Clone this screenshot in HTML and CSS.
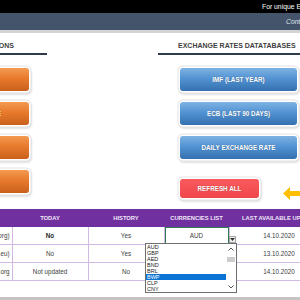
FILE: index.html
```html
<!DOCTYPE html>
<html>
<head>
<meta charset="utf-8">
<link rel="stylesheet" href="styles.css">
</head>
<body>
<div class="topbar">For unique Exchange Rates Excel templates visit our website</div>
<div class="navbar">Contact us</div>
<div class="rule"></div>
<div class="main">
  <section class="col col-left">
    <h2 class="heading">ADDITIONAL FUNCTIONS</h2>
    <div class="btns">
      <div class="btn orange">CONVERTER</div>
      <div class="btn orange">ADD CUSTOM RATE</div>
      <div class="btn orange">SETTINGS</div>
      <div class="btn orange">HELP</div>
    </div>
  </section>
  <section class="col col-right">
    <h2 class="heading">EXCHANGE RATES DATATABASES</h2>
    <div class="btns">
      <div class="btn blue">IMF (LAST YEAR)</div>
      <div class="btn blue">ECB (LAST 90 DAYS)</div>
      <div class="btn blue">DAILY EXCHANGE RATE</div>
      <div class="refresh-row">
        <div class="btn red">REFRESH ALL</div>
        <svg class="arrow" width="20" height="13" viewBox="0 0 20 13"><polygon points="0,6.5 7,0 7,4 20,4 20,9 7,9 7,13" fill="#ffbf00"/></svg>
      </div>
    </div>
  </section>
</div>
<table class="grid">
  <thead>
    <tr><th class="c0"></th><th class="c1">TODAY</th><th class="c2">HISTORY</th><th class="c3">CURRENCIES LIST</th><th class="c4">LAST AVAILABLE UPDATE</th></tr>
  </thead>
  <tbody>
    <tr><td class="src">IMF (imf.org)</td><td class="strong">No</td><td>Yes</td><td class="sel">AUD</td><td>14.10.2020</td></tr>
    <tr><td class="src">ECB (europa.eu)</td><td>No</td><td>Yes</td><td></td><td>13.10.2020</td></tr>
    <tr><td class="src">Exchangerate.org</td><td>Not updated</td><td>No</td><td></td><td>14.10.2020</td></tr>
  </tbody>
</table>
<div class="footer"></div>
<div class="dd-btn"><svg width="5" height="3" viewBox="0 0 5 3"><polygon points="0,0 5,0 2.5,3" fill="#333"/></svg></div>
<div class="dropdown">
  <ul class="dd-list">
    <li>AUD</li><li>GBP</li><li>AED</li><li>BND</li><li>BRL</li><li class="on">BWP</li><li>CLP</li><li>CNY</li>
  </ul>
  <div class="dd-scroll">
    <svg width="6" height="4" viewBox="0 0 6 4"><polyline points="0.5,3.5 3,1 5.5,3.5" fill="none" stroke="#555" stroke-width="1"/></svg>
    <div class="thumb"></div>
    <svg class="down" width="6" height="4" viewBox="0 0 6 4"><polyline points="0.5,0.5 3,3 5.5,0.5" fill="none" stroke="#555" stroke-width="1"/></svg>
  </div>
</div>
</body>
</html>
```
FILE: styles.css
```css
html, body {
  margin: 0;
  padding: 0;
}
body {
  width: 300px;
  height: 300px;
  overflow: hidden;
  position: relative;
  display: flex;
  flex-direction: column;
  background: #fff;
  font-family: "Liberation Sans", Arial, sans-serif;
}
.topbar {
  height: 13px;
  flex: none;
  background: #000;
  color: #fff;
  font-size: 6.8px;
  line-height: 13px;
  padding-left: 262px;
  white-space: nowrap;
  overflow: hidden;
}
.navbar {
  height: 17px;
  flex: none;
  background: #44546a;
  color: #dfe5ee;
  font-style: italic;
  font-size: 6.8px;
  line-height: 17px;
  padding-left: 286px;
  white-space: nowrap;
  overflow: hidden;
}
.rule {
  height: 3px;
  flex: none;
  background: #d4d4d4;
}
.main {
  display: flex;
  gap: 111px;
  margin-left: -113px;
  flex: none;
}
.col {
  width: 160px;
  flex: none;
}
.heading {
  margin: 0;
  padding: 8px 0 3px;
  font-size: 7px;
  line-height: 9px;
  font-weight: bold;
  color: #3f3f3f;
  white-space: nowrap;
  border-bottom: 2px solid #2f3b4c;
}
.col-left .heading {
  text-align: right;
  padding-right: 33px;
}
.col-right .heading {
  padding-left: 20px;
}
.btns {
  display: flex;
  flex-direction: column;
  gap: 11px;
  margin-top: 13px;
}
.col-left .btns {
  align-items: flex-end;
  padding-right: 18px;
}
.col-right .btns {
  padding-left: 22px;
}
.btn {
  width: 117px;
  height: 23px;
  border-radius: 3px;
  color: #fff;
  font-size: 6.3px;
  font-weight: bold;
  display: flex;
  align-items: center;
  justify-content: center;
  white-space: nowrap;
  text-shadow: 0 0 1px rgba(0,0,0,0.35);
  box-shadow: 0 0 0 1.5px #fff, 0 0 0 2.5px #e2e2e2, 1px 2px 2px 2px rgba(0,0,0,0.12);
}
.orange {
  background: linear-gradient(#f39a52, #e87a2c 45%, #c9601c);
}
.blue {
  background: linear-gradient(#7fb3e3, #5393d3 45%, #3470b0);
}
.refresh-row {
  display: flex;
  align-items: flex-start;
  gap: 24px;
  margin-top: 9px;
}
.red {
  width: 79px;
  height: 19px;
  background: linear-gradient(#f95a5e, #f0474b);
}
.arrow {
  flex: none;
  margin-top: 8px;
}
.grid {
  border-collapse: collapse;
  table-layout: fixed;
  margin-top: 9px;
  margin-left: -68px;
  width: 397px;
  flex: none;
}
.grid th {
  background: #7030a0;
  color: #efe6f7;
  font-size: 5.8px;
  font-weight: bold;
  height: 18px;
  padding: 0;
  white-space: nowrap;
}
.c0 { width: 80px; }
.c1 { width: 76px; }
.c2 { width: 76px; }
.c3 { width: 65px; }
.c4 { width: 100px; }
.grid td {
  height: 17px;
  padding: 0;
  border-bottom: 1px solid #d2b8e4;
  border-right: 1px solid #d2b8e4;
  font-size: 6.3px;
  color: #404040;
  text-align: center;
  white-space: nowrap;
  overflow: hidden;
}
.grid td.src {
  text-align: right;
  padding-right: 2px;
}
.grid td.strong {
  font-weight: bold;
  color: #262626;
}
.grid td.sel {
  box-shadow: inset 0 0 0 1px #2e7d4f;
}
.footer {
  margin-top: auto;
  height: 3px;
  background: #c4c4c4;
  flex: none;
}
.dd-btn {
  position: absolute;
  left: 229px;
  top: 236px;
  width: 7px;
  height: 7px;
  background: #f0f0f0;
  border: 1px solid #a6a6a6;
  box-sizing: border-box;
  display: flex;
  align-items: center;
  justify-content: center;
}
.dropdown {
  position: absolute;
  left: 145px;
  top: 243px;
  width: 92px;
  height: 50px;
  box-sizing: border-box;
  border: 1px solid #6f6f6f;
  background: #fff;
  display: flex;
}
.dd-list {
  list-style: none;
  margin: 0;
  padding: 0;
  flex: 1;
}
.dd-list li {
  height: 6px;
  line-height: 6px;
  font-size: 5.5px;
  color: #222;
  padding-left: 1px;
}
.dd-list li.on {
  background: #0a74d4;
  color: #fff;
}
.dd-scroll {
  width: 10px;
  flex: none;
  display: flex;
  flex-direction: column;
  align-items: center;
  padding-top: 3px;
  box-sizing: border-box;
}
.thumb {
  width: 8px;
  height: 5px;
  background: #cdcdcd;
  margin-top: 6px;
}
.dd-scroll .down {
  margin-top: auto;
  margin-bottom: 3px;
}
```
